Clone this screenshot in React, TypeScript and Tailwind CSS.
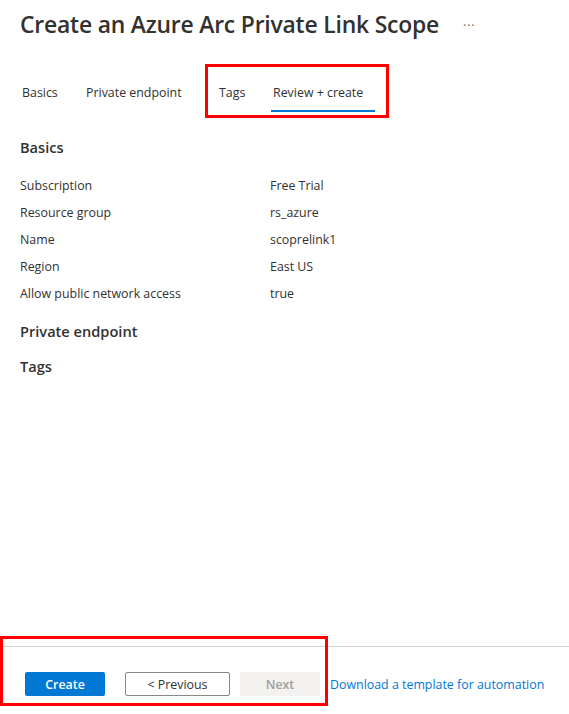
import React from "react";

const ROWS: [string, string][] = [
  ["Subscription", "Free Trial"],
  ["Resource group", "rs_azure"],
  ["Name", "scoprelink1"],
  ["Region", "East US"],
  ["Allow public network access", "true"],
];

const TABS = [
  { label: "Basics", w: "w-[64px]" },
  { label: "Private endpoint", w: "w-[133px]" },
  { label: "Tags", w: "w-[54px]" },
];

export default function App() {
  return (
    <div
      className="relative flex h-[714px] w-[569px] flex-col overflow-hidden bg-white text-[#323130]"
      style={{ fontFamily: '"Segoe UI", "Open Sans", sans-serif' }}
    >
      <div className="flex items-center pl-5 pt-[9px]">
        <h1 className="text-[22.9px] font-semibold leading-[32px] tracking-[-0.2px]">
          Create an Azure Arc Private Link Scope
        </h1>
        <span className="ml-[24px] mt-[2px] text-[12px] tracking-[1px] text-[#605e5c]">···</span>
      </div>

      <div className="mt-[41px] flex pl-[22px] text-[12.4px] leading-[20px]">
        {TABS.map((t) => (
          <div key={t.label} className={`${t.w} border-b-2 border-transparent pb-[7px] pt-[1px]`}>
            {t.label}
          </div>
        ))}
        <div className="ml-[-2px] w-[104px] border-b-2 border-[#0078d4] pb-[7px] pl-[2px] pt-[1px]">
          Review + create
        </div>
      </div>

      <div className="px-5">
        <h2 className="mt-[25px] text-[14.6px] font-semibold leading-[20px]">Basics</h2>
        <div className="mt-[15px]">
          {ROWS.map(([k, v]) => (
            <div key={k} className="flex h-[27px] items-center pt-[2px] text-[12.4px]">
              <span className="w-[250px]">{k}</span>
              <span>{v}</span>
            </div>
          ))}
        </div>
        <h2 className="mt-[14px] text-[14.6px] font-semibold leading-[20px]">Private endpoint</h2>
        <h2 className="mt-[15px] text-[14.6px] font-semibold leading-[20px]">Tags</h2>
      </div>

      <div className="flex-1" />

      <div className="flex items-center border-t border-[#d6d6d6] pb-[18px] pl-[25px] pt-[25px] text-[12.4px]">
        <button className="h-[24px] w-[80px] rounded-[2px] bg-[#0078d4] pt-[2px] font-semibold text-white">
          Create
        </button>
        <button className="ml-[20px] h-[24px] w-[105px] rounded-[2px] border border-[#8a8886] bg-white pt-[2px]">
          &lt; Previous
        </button>
        <button className="ml-[10px] h-[24px] w-[80px] rounded-[2px] bg-[#f3f2f1] pt-[2px] font-semibold text-[#a19f9d]">
          Next
        </button>
        <a className="ml-[10px] pt-[2px] text-[#0078d4]" href="#">
          Download a template for automation
        </a>
      </div>

      <div className="pointer-events-none absolute left-[205px] top-[64px] h-[54px] w-[184px] border-[3px] border-[#ff0000]" />
      <div className="pointer-events-none absolute left-0 top-[636px] h-[70px] w-[328px] border-[3px] border-[#ff0000]" />
    </div>
  );
}
